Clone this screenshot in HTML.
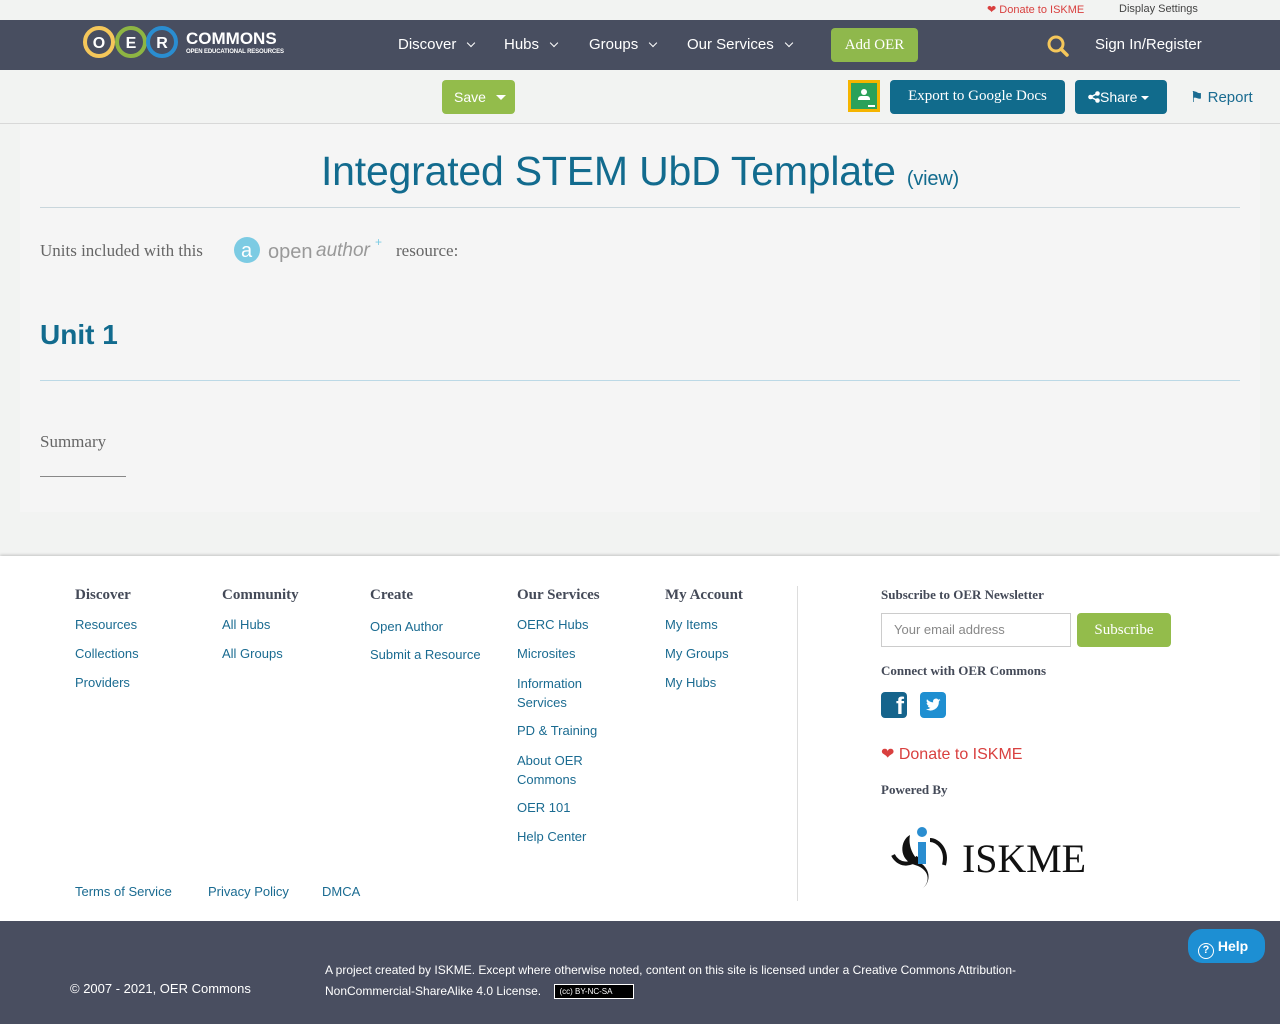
<!DOCTYPE html>
<html><head><meta charset="utf-8"><style>
*{margin:0;padding:0;box-sizing:border-box}
body{width:1280px;height:1024px;position:relative;background:#f2f3f2;font-family:"Liberation Sans",sans-serif;overflow:hidden}
.a{position:absolute;white-space:nowrap}
.lk{color:#1a6b91;font-size:13px}
.h{font-family:"Liberation Serif",serif;font-weight:bold;font-size:15px;color:#444a58}
.nav{color:#fff;font-size:15px}
.car{display:inline-block;width:6px;height:6px;border-right:1.6px solid #fff;border-bottom:1.6px solid #fff;transform:rotate(45deg);margin-left:12px;position:relative;top:-3px}
</style></head><body>
<div class="a" style="left:987px;top:3px;font-size:11px;color:#d9403f">&#10084; Donate to ISKME</div>
<div class="a" style="left:1119px;top:3px;font-size:11px;color:#444">Display Settings</div>
<div class="a" style="left:0;top:20px;width:1280px;height:50px;background:#484e60"></div>
<svg class="a" style="left:82px;top:25px" width="205" height="36" viewBox="0 0 205 36">
<circle cx="17" cy="17" r="14" fill="none" stroke="#f5c75a" stroke-width="4"/>
<circle cx="49" cy="17" r="14" fill="none" stroke="#8db543" stroke-width="4"/>
<circle cx="80" cy="17" r="14" fill="none" stroke="#2a8dd0" stroke-width="4"/>
<text x="17" y="23" font-family="Liberation Sans" font-weight="bold" font-size="16" fill="#fff" text-anchor="middle">O</text>
<text x="49" y="23" font-family="Liberation Sans" font-weight="bold" font-size="16" fill="#fff" text-anchor="middle">E</text>
<text x="80" y="23" font-family="Liberation Sans" font-weight="bold" font-size="16" fill="#fff" text-anchor="middle">R</text>
<text x="104" y="19" font-family="Liberation Sans" font-weight="bold" font-size="17" fill="#fff">COMMONS</text>
<text x="104" y="28" font-family="Liberation Sans" font-weight="bold" font-size="6" fill="#fff" textLength="98">OPEN EDUCATIONAL RESOURCES</text>
</svg>
<div class="a nav" style="left:398px;top:36px">Discover<span class="car"></span></div>
<div class="a nav" style="left:504px;top:36px">Hubs<span class="car"></span></div>
<div class="a nav" style="left:589px;top:36px">Groups<span class="car"></span></div>
<div class="a nav" style="left:687px;top:36px">Our Services<span class="car"></span></div>
<div class="a" style="left:831px;top:28px;width:87px;height:34px;background:#8fb84c;border-radius:4px;color:#fff;font-family:'Liberation Serif',serif;font-size:15px;text-align:center;line-height:34px">Add OER</div>
<svg class="a" style="left:1046px;top:34px" width="24" height="24"><circle cx="10" cy="10" r="7" fill="none" stroke="#f5c75a" stroke-width="3"/><line x1="15" y1="15" x2="21" y2="21" stroke="#f5c75a" stroke-width="3.5" stroke-linecap="round"/></svg>
<div class="a nav" style="left:1095px;top:36px">Sign In/Register</div>
<div class="a" style="left:0;top:123px;width:1280px;height:1px;background:#d8d8d8"></div>
<div class="a" style="left:442px;top:80px;width:73px;height:34px;background:#93bc4b;border-radius:4px;color:#fff;font-size:14px;line-height:34px;padding-left:12px">Save <span style="display:inline-block;border:5px solid transparent;border-top-color:#fff;margin-left:6px;position:relative;top:3px"></span></div>
<div class="a" style="left:848px;top:80px;width:32px;height:32px;background:#f5b400;padding:3px"><div style="width:26px;height:26px;background:#2aa15a;position:relative"><div style="position:absolute;left:10px;top:6px;width:6px;height:6px;border-radius:50%;background:#fff"></div><div style="position:absolute;left:7px;top:13px;width:12px;height:4px;background:#fff;border-radius:3px 3px 0 0"></div><div style="position:absolute;right:2px;bottom:2px;width:7px;height:2px;background:#fff"></div></div></div>
<div class="a" style="left:890px;top:80px;width:175px;height:34px;background:#116b8c;border-radius:4px;color:#fff;font-family:'Liberation Serif',serif;font-size:15px;text-align:center;line-height:33px">Export to Google Docs</div>
<div class="a" style="left:1075px;top:80px;width:92px;height:34px;background:#116b8c;border-radius:4px;color:#fff;font-size:14px;line-height:34px;padding-left:13px"><svg width="12" height="12" style="vertical-align:-1px"><circle cx="9.5" cy="2.5" r="2.3" fill="#fff"/><circle cx="2.5" cy="6" r="2.3" fill="#fff"/><circle cx="9.5" cy="9.5" r="2.3" fill="#fff"/><path d="M9.5 2.5L2.5 6L9.5 9.5" stroke="#fff" stroke-width="1.5" fill="none"/></svg>Share <span style="display:inline-block;border:4px solid transparent;border-top-color:#fff;position:relative;top:2px"></span></div>
<div class="a" style="left:1190px;top:88px;color:#1a6b91;font-size:15px">&#9873; Report</div>
<div class="a" style="left:20px;top:124px;width:1240px;height:388px;background:#f5f5f5"></div>
<div class="a" style="left:0;top:148px;width:1280px;text-align:center;color:#126b8e;font-size:41px;letter-spacing:-0.2px">Integrated STEM UbD Template <span style="font-size:20px">(view)</span></div>
<div class="a" style="left:40px;top:207px;width:1200px;height:1px;background:#c9d6dc"></div>
<div class="a" style="left:40px;top:241px;font-family:'Liberation Serif',serif;font-size:17px;color:#666">Units included with this</div>
<svg class="a" style="left:232px;top:234px" width="155" height="32"><circle cx="15" cy="16" r="13" fill="#7ccbe3"/><text x="9" y="23" font-size="20" font-family="Liberation Sans" fill="#fff">a</text><text x="36" y="24" font-size="20" font-family="Liberation Sans" fill="#999">open</text><text x="84" y="22" font-size="19" font-family="Liberation Sans" font-style="italic" fill="#999">author</text><text x="143" y="12" font-size="12" fill="#7ccbe3">+</text></svg>
<div class="a" style="left:396px;top:241px;font-family:'Liberation Serif',serif;font-size:17px;color:#666">resource:</div>
<div class="a" style="left:40px;top:319px;font-size:28px;font-weight:bold;color:#126b8e">Unit 1</div>
<div class="a" style="left:40px;top:380px;width:1200px;height:1px;background:#bcd9e6"></div>
<div class="a" style="left:40px;top:432px;font-family:'Liberation Serif',serif;font-size:17px;color:#666">Summary</div>
<div class="a" style="left:40px;top:476px;width:86px;height:1px;background:#888"></div>
<div class="a" style="left:0;top:556px;width:1280px;height:365px;background:#fff;box-shadow:0 -1px 3px rgba(0,0,0,.2)"></div>
<div class="a h" style="left:75px;top:587px">Discover</div>
<div class="a lk" style="left:75px;top:617px">Resources</div>
<div class="a lk" style="left:75px;top:646px">Collections</div>
<div class="a lk" style="left:75px;top:675px">Providers</div>
<div class="a h" style="left:222px;top:587px">Community</div>
<div class="a lk" style="left:222px;top:617px">All Hubs</div>
<div class="a lk" style="left:222px;top:646px">All Groups</div>
<div class="a h" style="left:370px;top:587px">Create</div>
<div class="a lk" style="left:370px;top:619px">Open Author</div>
<div class="a lk" style="left:370px;top:647px">Submit a Resource</div>
<div class="a h" style="left:517px;top:587px">Our Services</div>
<div class="a lk" style="left:517px;top:617px">OERC Hubs</div>
<div class="a lk" style="left:517px;top:646px">Microsites</div>
<div class="a lk" style="left:517px;top:674px;line-height:19px;white-space:normal;width:100px">Information Services</div>
<div class="a lk" style="left:517px;top:723px">PD &amp; Training</div>
<div class="a lk" style="left:517px;top:751px;line-height:19px;white-space:normal;width:100px">About OER Commons</div>
<div class="a lk" style="left:517px;top:800px">OER 101</div>
<div class="a lk" style="left:517px;top:829px">Help Center</div>
<div class="a h" style="left:665px;top:587px">My Account</div>
<div class="a lk" style="left:665px;top:617px">My Items</div>
<div class="a lk" style="left:665px;top:646px">My Groups</div>
<div class="a lk" style="left:665px;top:675px">My Hubs</div>
<div class="a lk" style="left:75px;top:884px">Terms of Service</div>
<div class="a lk" style="left:208px;top:884px">Privacy Policy</div>
<div class="a lk" style="left:322px;top:884px">DMCA</div>
<div class="a" style="left:797px;top:586px;width:1px;height:315px;background:#ddd"></div>
<div class="a h" style="left:881px;top:587px;font-size:13px">Subscribe to OER Newsletter</div>
<div class="a" style="left:881px;top:613px;width:190px;height:34px;border:1px solid #ccc;color:#888;font-size:13px;line-height:32px;padding-left:12px">Your email address</div>
<div class="a" style="left:1077px;top:613px;width:94px;height:34px;background:#93bc4b;border-radius:4px;color:#fff;font-family:'Liberation Serif',serif;font-size:15px;line-height:34px;text-align:center">Subscribe</div>
<div class="a h" style="left:881px;top:663px;font-size:13px">Connect with OER Commons</div>
<div class="a" style="left:881px;top:692px;width:26px;height:26px;background:#15648c;border-radius:4px;color:#fff;font-weight:bold;font-size:24px;text-align:right;padding-right:3px;line-height:30px;overflow:hidden">f</div>
<div class="a" style="left:920px;top:692px;width:26px;height:26px;background:#1f8fd1;border-radius:4px"><svg width="26" height="26" viewBox="0 0 24 24"><path d="M19 7.5c-.5.2-1 .4-1.6.4.6-.3 1-.9 1.2-1.5-.5.3-1.1.5-1.7.7a2.7 2.7 0 0 0-4.7 2.5C9.900 9.500 7.900 8.400 6.500 6.700c-.8 1.300-.3 2.900.8 3.600-.4 0-.9-.1-1.200-.3 0 1.300.9 2.400 2.200 2.700-.4.1-.8.1-1.200 0 .3 1.100 1.400 1.900 2.500 1.900A5.500 5.500 0 0 1 5.500 15.800 7.700 7.700 0 0 0 17.400 9v-.4c.6-.3 1.100-.8 1.600-1.100z" fill="#fff"/></svg></div>
<div class="a" style="left:881px;top:744px;color:#d9403f;font-size:16px">&#10084; Donate to ISKME</div>
<div class="a h" style="left:881px;top:782px;font-size:13px">Powered By</div>
<svg class="a" style="left:890px;top:820px" width="200" height="72"><path d="M20 15c-10 5-12 25 5 30s15 20 5 25c10-5 12-18 2-26S18 25 20 15z" fill="#111"/><path d="M3 35c5 10 18 12 25 2" stroke="#111" stroke-width="4" fill="none"/><path d="M40 20c8 0 18 10 14 25" stroke="#111" stroke-width="4" fill="none"/><circle cx="32" cy="12" r="5" fill="#2a8dd0"/><path d="M28 22h8v22h-8z" fill="#2a8dd0"/><text x="72" y="52" font-family="Liberation Serif" font-size="40" fill="#111" textLength="124">ISKME</text></svg>
<div class="a" style="left:0;top:921px;width:1280px;height:103px;background:#494e60"></div>
<div class="a" style="left:70px;top:981px;color:#fff;font-size:13px">© 2007 - 2021, OER Commons</div>
<div class="a" style="left:325px;top:960px;color:#fff;font-size:12px;line-height:21px">A project created by ISKME. Except where otherwise noted, content on this site is licensed under a Creative Commons Attribution-<br>NonCommercial-ShareAlike 4.0 License. <span style="display:inline-block;margin-left:10px;width:80px;height:15px;background:#000;border:1px solid #fff;font-size:8px;line-height:13px;vertical-align:middle;padding-left:4px">(cc) BY-NC-SA</span></div>
<div class="a" style="left:1188px;top:929px;width:77px;height:34px;background:#1d8fd3;border-radius:14px;color:#fff;font-weight:bold;font-size:14px;line-height:34px;padding-left:10px"><span style="display:inline-block;width:16px;height:16px;border:1.5px solid #fff;border-radius:50%;font-size:11px;line-height:13px;text-align:center;vertical-align:-2px">?</span> Help</div>
</body></html>
